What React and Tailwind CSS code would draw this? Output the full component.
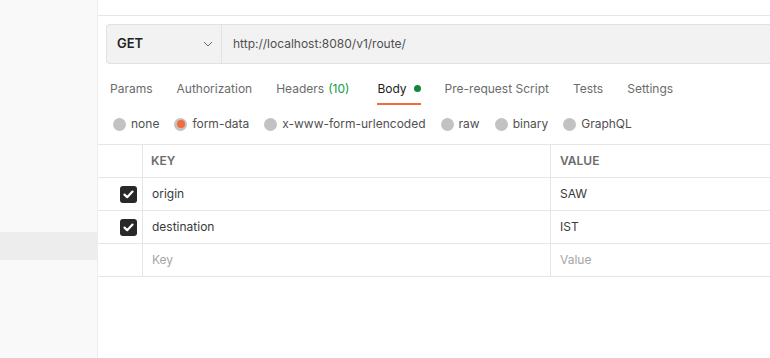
import React from 'react';

const tabs = [
  { label: 'Params' },
  { label: 'Authorization' },
  { label: 'Headers', count: '(10)' },
  { label: 'Body', active: true, dot: true },
  { label: 'Pre-request Script' },
  { label: 'Tests' },
  { label: 'Settings' },
];

const bodyTypes = [
  { label: 'none' },
  { label: 'form-data', checked: true },
  { label: 'x-www-form-urlencoded' },
  { label: 'raw' },
  { label: 'binary' },
  { label: 'GraphQL' },
];

const rows = [
  { key: 'origin', value: 'SAW' },
  { key: 'destination', value: 'IST' },
];

function Check() {
  return (
    <span className="flex h-[17px] w-[17px] items-center justify-center rounded-[3px] bg-[#282828]">
      <svg width="11" height="9" viewBox="0 0 11 9" fill="none">
        <path d="M1.5 4.6 4.2 7.2 9.5 1.6" stroke="white" strokeWidth="2.2" strokeLinecap="round" strokeLinejoin="round" />
      </svg>
    </span>
  );
}

function Radio({ checked }) {
  return (
    <span className="flex h-[13px] w-[13px] items-center justify-center rounded-full bg-[#c2c2c2]">
      {checked && <span className="h-[8px] w-[8px] rounded-full bg-[#f26b3a]" />}
    </span>
  );
}

export default function App() {
  return (
    <div
      className="flex h-[358px] w-[770px] overflow-hidden bg-white text-[12px] text-[#212121]"
      style={{ fontFamily: 'Inter, "Noto Sans", sans-serif' }}
    >
      {/* sidebar */}
      <aside className="w-[98px] shrink-0 border-r border-[#ededed] bg-[#f9f9f9]">
        <div className="mt-[232px] h-[28px] bg-[#ededed]" />
      </aside>

      <main className="min-w-0 flex-1">
        <div className="h-[16px] border-b border-[#e6e6e6]" />

        {/* url bar */}
        <div className="ml-[8px] mt-[8px] flex h-[40px] rounded-l-[4px] border border-r-0 border-[#e2e2e2] bg-[#f2f2f2]">
          <div className="flex w-[115px] shrink-0 items-center justify-between border-r border-[#e2e2e2] pl-[10px] pr-[8px]">
            <span className="text-[13px] font-semibold text-[#212121]">GET</span>
            <svg width="10" height="6" viewBox="0 0 10 6" fill="none">
              <path d="M1 1l4 4 4-4" stroke="#6b6b6b" strokeWidth="1" />
            </svg>
          </div>
          <div className="flex items-center pl-[11px] text-[#505050]">http://localhost:8080/v1/route/</div>
        </div>

        {/* tabs */}
        <div className="mt-[13px] flex gap-[24px] pl-[12px]">
          {tabs.map((t) => (
            <div
              key={t.label}
              className={`flex h-[28px] items-start gap-[7px] border-b-2 pt-[3px] ${
                t.active ? 'border-[#f26b3a] text-[#212121]' : 'border-transparent text-[#6b6b6b]'
              } ${t.count ? 'pr-[4px]' : ''}`}
            >
              <span>
                {t.label}
                {t.count && <span className="ml-[4px] text-[#0f9b47]">{t.count}</span>}
              </span>
              {t.dot && <span className="mt-[5px] h-[7px] w-[7px] rounded-full bg-[#0f8a3b]" />}
            </div>
          ))}
        </div>

        {/* body type */}
        <div className="flex h-[39px] items-center gap-[15px] pb-[1px] pl-[15px]">
          {bodyTypes.map((b) => (
            <label key={b.label} className="flex items-center gap-[5px] text-[#505050]">
              <Radio checked={b.checked} />
              <span>{b.label}</span>
            </label>
          ))}
        </div>

        {/* table */}
        <div className="border-t border-[#e6e6e6]">
          <div className="flex h-[33px] border-b border-[#e6e6e6]">
            <div className="w-[45px] shrink-0 border-r border-[#e6e6e6]" />
            <div className="flex w-[408px] shrink-0 items-center border-r border-[#e6e6e6] pl-[8px] text-[12px] font-semibold text-[#6b6b6b]">KEY</div>
            <div className="flex flex-1 items-center pl-[9px] text-[12px] font-semibold text-[#6b6b6b]">VALUE</div>
          </div>
          {rows.map((r) => (
            <div key={r.key} className="flex h-[33px] border-b border-[#e6e6e6]">
              <div className="flex w-[45px] shrink-0 items-center justify-end border-r border-[#e6e6e6] pr-[5px]">
                <Check />
              </div>
              <div className="flex w-[408px] shrink-0 items-center border-r border-[#e6e6e6] pl-[9px] text-[#3a3a3a]">{r.key}</div>
              <div className="flex flex-1 items-center pl-[9px] text-[#3a3a3a]">{r.value}</div>
            </div>
          ))}
          <div className="flex h-[33px] border-b border-[#e6e6e6]">
            <div className="w-[45px] shrink-0 border-r border-[#e6e6e6]" />
            <div className="flex w-[408px] shrink-0 items-center border-r border-[#e6e6e6] pl-[9px] text-[#a6a6a6]">Key</div>
            <div className="flex flex-1 items-center pl-[9px] text-[#a6a6a6]">Value</div>
          </div>
        </div>
      </main>
    </div>
  );
}
